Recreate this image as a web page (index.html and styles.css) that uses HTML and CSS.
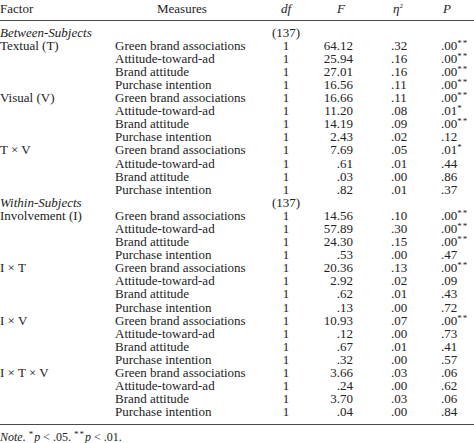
FILE: index.html
```html
<!DOCTYPE html>
<html>
<head>
<meta charset="utf-8">
<link rel="stylesheet" href="styles.css">
</head>
<body>
<div class="table">
  <div class="r head">
    <span class="c-fac">Factor</span>
    <span class="c-mea mea-h">Measures</span>
    <span class="c-df"><i>df</i></span>
    <span class="c-f f-h"><i>F</i></span>
    <span class="c-eta eta-h"><i>η</i><sup class="two">2</sup></span>
    <span class="c-p p-h"><i>P</i></span>
  </div>
  <div class="body">
    <div class="r"><span class="c-fac"><i>Between-Subjects</i></span><span class="c-mea"></span><span class="c-df">(137)</span><span class="c-f"></span><span class="c-eta"></span><span class="c-p"></span></div>
    <div class="r"><span class="c-fac">Textual (T)</span><span class="c-mea">Green brand associations</span><span class="c-df">1</span><span class="c-f">64.12</span><span class="c-eta">.32</span><span class="c-p">.00<sup>**</sup></span></div>
    <div class="r"><span class="c-fac"></span><span class="c-mea">Attitude-toward-ad</span><span class="c-df">1</span><span class="c-f">25.94</span><span class="c-eta">.16</span><span class="c-p">.00<sup>**</sup></span></div>
    <div class="r"><span class="c-fac"></span><span class="c-mea">Brand attitude</span><span class="c-df">1</span><span class="c-f">27.01</span><span class="c-eta">.16</span><span class="c-p">.00<sup>**</sup></span></div>
    <div class="r"><span class="c-fac"></span><span class="c-mea">Purchase intention</span><span class="c-df">1</span><span class="c-f">16.56</span><span class="c-eta">.11</span><span class="c-p">.00<sup>**</sup></span></div>
    <div class="r"><span class="c-fac">Visual (V)</span><span class="c-mea">Green brand associations</span><span class="c-df">1</span><span class="c-f">16.66</span><span class="c-eta">.11</span><span class="c-p">.00<sup>**</sup></span></div>
    <div class="r"><span class="c-fac"></span><span class="c-mea">Attitude-toward-ad</span><span class="c-df">1</span><span class="c-f">11.20</span><span class="c-eta">.08</span><span class="c-p">.01<sup>*</sup></span></div>
    <div class="r"><span class="c-fac"></span><span class="c-mea">Brand attitude</span><span class="c-df">1</span><span class="c-f">14.19</span><span class="c-eta">.09</span><span class="c-p">.00<sup>**</sup></span></div>
    <div class="r"><span class="c-fac"></span><span class="c-mea">Purchase intention</span><span class="c-df">1</span><span class="c-f">2.43</span><span class="c-eta">.02</span><span class="c-p">.12</span></div>
    <div class="r"><span class="c-fac">T × V</span><span class="c-mea">Green brand associations</span><span class="c-df">1</span><span class="c-f">7.69</span><span class="c-eta">.05</span><span class="c-p">.01<sup>*</sup></span></div>
    <div class="r"><span class="c-fac"></span><span class="c-mea">Attitude-toward-ad</span><span class="c-df">1</span><span class="c-f">.61</span><span class="c-eta">.01</span><span class="c-p">.44</span></div>
    <div class="r"><span class="c-fac"></span><span class="c-mea">Brand attitude</span><span class="c-df">1</span><span class="c-f">.03</span><span class="c-eta">.00</span><span class="c-p">.86</span></div>
    <div class="r"><span class="c-fac"></span><span class="c-mea">Purchase intention</span><span class="c-df">1</span><span class="c-f">.82</span><span class="c-eta">.01</span><span class="c-p">.37</span></div>
    <div class="r"><span class="c-fac"><i>Within-Subjects</i></span><span class="c-mea"></span><span class="c-df">(137)</span><span class="c-f"></span><span class="c-eta"></span><span class="c-p"></span></div>
    <div class="r"><span class="c-fac">Involvement (I)</span><span class="c-mea">Green brand associations</span><span class="c-df">1</span><span class="c-f">14.56</span><span class="c-eta">.10</span><span class="c-p">.00<sup>**</sup></span></div>
    <div class="r"><span class="c-fac"></span><span class="c-mea">Attitude-toward-ad</span><span class="c-df">1</span><span class="c-f">57.89</span><span class="c-eta">.30</span><span class="c-p">.00<sup>**</sup></span></div>
    <div class="r"><span class="c-fac"></span><span class="c-mea">Brand attitude</span><span class="c-df">1</span><span class="c-f">24.30</span><span class="c-eta">.15</span><span class="c-p">.00<sup>**</sup></span></div>
    <div class="r"><span class="c-fac"></span><span class="c-mea">Purchase intention</span><span class="c-df">1</span><span class="c-f">.53</span><span class="c-eta">.00</span><span class="c-p">.47</span></div>
    <div class="r"><span class="c-fac">I × T</span><span class="c-mea">Green brand associations</span><span class="c-df">1</span><span class="c-f">20.36</span><span class="c-eta">.13</span><span class="c-p">.00<sup>**</sup></span></div>
    <div class="r"><span class="c-fac"></span><span class="c-mea">Attitude-toward-ad</span><span class="c-df">1</span><span class="c-f">2.92</span><span class="c-eta">.02</span><span class="c-p">.09</span></div>
    <div class="r"><span class="c-fac"></span><span class="c-mea">Brand attitude</span><span class="c-df">1</span><span class="c-f">.62</span><span class="c-eta">.01</span><span class="c-p">.43</span></div>
    <div class="r"><span class="c-fac"></span><span class="c-mea">Purchase intention</span><span class="c-df">1</span><span class="c-f">.13</span><span class="c-eta">.00</span><span class="c-p">.72</span></div>
    <div class="r"><span class="c-fac">I × V</span><span class="c-mea">Green brand associations</span><span class="c-df">1</span><span class="c-f">10.93</span><span class="c-eta">.07</span><span class="c-p">.00<sup>**</sup></span></div>
    <div class="r"><span class="c-fac"></span><span class="c-mea">Attitude-toward-ad</span><span class="c-df">1</span><span class="c-f">.12</span><span class="c-eta">.00</span><span class="c-p">.73</span></div>
    <div class="r"><span class="c-fac"></span><span class="c-mea">Brand attitude</span><span class="c-df">1</span><span class="c-f">.67</span><span class="c-eta">.01</span><span class="c-p">.41</span></div>
    <div class="r"><span class="c-fac"></span><span class="c-mea">Purchase intention</span><span class="c-df">1</span><span class="c-f">.32</span><span class="c-eta">.00</span><span class="c-p">.57</span></div>
    <div class="r"><span class="c-fac">I × T × V</span><span class="c-mea">Green brand associations</span><span class="c-df">1</span><span class="c-f">3.66</span><span class="c-eta">.03</span><span class="c-p">.06</span></div>
    <div class="r"><span class="c-fac"></span><span class="c-mea">Attitude-toward-ad</span><span class="c-df">1</span><span class="c-f">.24</span><span class="c-eta">.00</span><span class="c-p">.62</span></div>
    <div class="r"><span class="c-fac"></span><span class="c-mea">Brand attitude</span><span class="c-df">1</span><span class="c-f">3.70</span><span class="c-eta">.03</span><span class="c-p">.06</span></div>
    <div class="r"><span class="c-fac"></span><span class="c-mea">Purchase intention</span><span class="c-df">1</span><span class="c-f">.04</span><span class="c-eta">.00</span><span class="c-p">.84</span></div>
  </div>
  <div class="note"><i>Note.</i> <sup>*</sup><i>p</i> &lt; .05. <sup>**</sup><i>p</i> &lt; .01.</div>
</div>
</body>
</html>
```

FILE: styles.css
```css
html, body {
  margin: 0;
  padding: 0;
  background: #ffffff;
}

body {
  font-family: "Liberation Serif", "Times New Roman", serif;
  font-size: 13px;
  color: #222222;
  overflow: hidden;
}

.table {
  width: 474px;
  padding-top: 1px;
}

.r {
  display: grid;
  grid-template-columns: 115px 155px 32px 51px 88px 33px;
  line-height: 13.1px;
  height: 13.1px;
  white-space: nowrap;
}

.r > span {
  display: block;
  overflow: visible;
}

.head {
  padding-top: 1px;
  padding-bottom: 5px;
  border-bottom: 1.5px solid #4a4a4a;
}

.body {
  padding-top: 4.5px;
  padding-bottom: 5.5px;
  border-bottom: 1.5px solid #4a4a4a;
}

.c-fac { text-align: left; }
.c-mea { text-align: left; }
.c-df { text-align: center; }
.c-f { text-align: right; }
.c-eta { text-align: left; padding-left: 38px; }
.c-p { text-align: left; }

.mea-h { padding-left: 42px; }
.f-h { padding-right: 8px; }
.eta-h { padding-left: 40px; }
.p-h { padding-left: 2px; }

sup {
  font-size: 9px;
  line-height: 0;
  vertical-align: 4px;
  letter-spacing: 1px;
}

.two {
  font-size: 7px;
  vertical-align: 5px;
  letter-spacing: 0;
}

.note {
  padding-top: 6px;
  line-height: 13px;
  font-size: 12px;
  white-space: nowrap;
}
```
